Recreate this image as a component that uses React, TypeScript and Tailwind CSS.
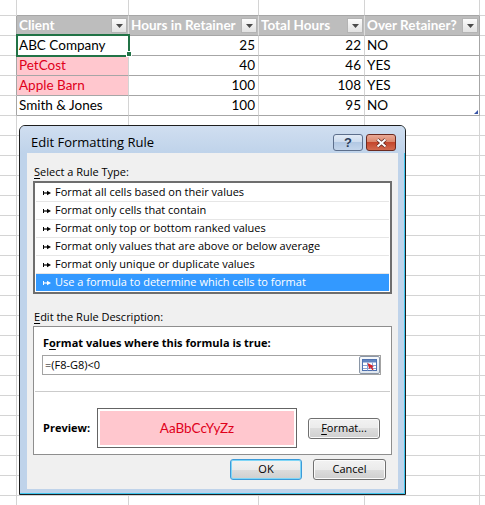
import React from 'react';

type DataRow = { client: string; hours: number; total: number; over: string; flagged: boolean };

const data: DataRow[] = [
  { client: 'ABC Company', hours: 25, total: 22, over: 'NO', flagged: false },
  { client: 'PetCost', hours: 40, total: 46, over: 'YES', flagged: true },
  { client: 'Apple Barn', hours: 100, total: 108, over: 'YES', flagged: true },
  { client: 'Smith & Jones', hours: 100, total: 95, over: 'NO', flagged: false },
];

const ruleTypes = [
  'Format all cells based on their values',
  'Format only cells that contain',
  'Format only top or bottom ranked values',
  'Format only values that are above or below average',
  'Format only unique or duplicate values',
  'Use a formula to determine which cells to format',
];

function FilterButton() {
  return (
    <div className="w-[16px] h-[15px] shrink-0 border border-[#b4b4b4] bg-linear-to-b from-[#fbfbfb] to-[#e2e2e2] flex items-center justify-center">
      <svg width="7" height="4" viewBox="0 0 7 4">
        <path d="M0 0h7L3.5 4z" fill="#4a4a4a" />
      </svg>
    </div>
  );
}

function HeaderCell({ w, label, last = false }: { w: string; label: string; last?: boolean }) {
  return (
    <div
      className={`${w} shrink-0 h-full border-r border-b border-b-[#a6a6a6] ${
        last ? 'border-r-[#a6a6a6]' : 'border-r-[#dedede]'
      } bg-[#bdbdbd] flex items-center pl-[2px] pr-[1px]`}
    >
      <span className="flex-1 min-w-0 overflow-hidden whitespace-nowrap font-bold text-white">{label}</span>
      <FilterButton />
    </div>
  );
}

function EmptyRow() {
  return (
    <div className="flex h-[20px] shrink-0">
      <div className="w-[17px] shrink-0 border-r border-b border-[#d4d4d4]" />
      <div className="w-[112px] shrink-0 border-r border-b border-[#d4d4d4]" />
      <div className="w-[130px] shrink-0 border-r border-b border-[#d4d4d4]" />
      <div className="w-[106px] shrink-0 border-r border-b border-[#d4d4d4]" />
      <div className="w-[115px] shrink-0 border-r border-b border-[#d4d4d4]" />
      <div className="flex-1 border-b border-[#d4d4d4]" />
    </div>
  );
}

function Sheet() {
  return (
    <div className="flex flex-col font-['Lato',sans-serif] text-[13.5px] text-black">
      {/* row above the table */}
      <div className="flex h-[16px] shrink-0">
        <div className="w-[17px] shrink-0 border-r border-b border-[#d4d4d4]" />
        <div className="w-[112px] shrink-0 border-r border-b border-r-[#d4d4d4] border-b-[#a6a6a6]" />
        <div className="w-[130px] shrink-0 border-r border-b border-r-[#d4d4d4] border-b-[#a6a6a6]" />
        <div className="w-[106px] shrink-0 border-r border-b border-r-[#d4d4d4] border-b-[#a6a6a6]" />
        <div className="w-[115px] shrink-0 border-r border-b border-r-[#d4d4d4] border-b-[#a6a6a6]" />
        <div className="flex-1 border-b border-[#d4d4d4]" />
      </div>

      {/* table header */}
      <div className="flex h-[20px] shrink-0">
        <div className="w-[17px] shrink-0 border-r border-b border-r-[#a6a6a6] border-b-[#d4d4d4]" />
        <HeaderCell w="w-[112px]" label="Client" />
        <HeaderCell w="w-[130px]" label="Hours in Retainer" />
        <HeaderCell w="w-[106px]" label="Total Hours" />
        <HeaderCell w="w-[115px]" label="Over Retainer?" last />
        <div className="flex-1 border-b border-[#d4d4d4]" />
      </div>

      {/* table body */}
      {data.map((r, i) => (
        <div key={r.client} className="flex h-[20px] shrink-0">
          <div className="w-[17px] shrink-0 border-r border-b border-r-[#a6a6a6] border-b-[#d4d4d4]" />
          <div
            className={`w-[112px] shrink-0 relative border-r border-b border-r-[#d4d4d4] border-b-[#a6a6a6] flex items-center px-[2px] whitespace-nowrap ${
              r.flagged ? 'bg-[#ffc7ce] text-[#e0001b]' : ''
            }`}
          >
            {r.client}
            {i === 0 && (
              <>
                <div className="absolute z-10 left-[-1px] top-[-2px] w-[114px] h-[23px] border-2 border-[#217346]" />
                <div className="absolute z-10 left-[109px] top-[15px] w-[6px] h-[6px] bg-[#217346] border border-white" />
              </>
            )}
          </div>
          <div className="w-[130px] shrink-0 border-r border-b border-r-[#d4d4d4] border-b-[#a6a6a6] flex items-center justify-end px-[3px]">
            {r.hours}
          </div>
          <div className="w-[106px] shrink-0 border-r border-b border-r-[#d4d4d4] border-b-[#a6a6a6] flex items-center justify-end px-[3px]">
            {r.total}
          </div>
          <div className="w-[115px] shrink-0 relative border-r border-b border-[#a6a6a6] flex items-center px-[2px]">
            {r.over}
            {i === data.length - 1 && (
              <svg className="absolute right-[1px] bottom-[1px]" width="4" height="4" viewBox="0 0 4 4">
                <path d="M4 0v4H0z" fill="#3a56a8" />
              </svg>
            )}
          </div>
          <div className="flex-1 border-b border-[#d4d4d4]" />
        </div>
      ))}

      {Array.from({ length: 20 }).map((_, i) => (
        <EmptyRow key={i} />
      ))}
    </div>
  );
}

function RuleIcon({ selected }: { selected: boolean }) {
  const c = selected ? '#ffffff' : '#000000';
  return (
    <svg width="8" height="6" viewBox="0 0 8 6" className="shrink-0">
      <path d="M0.5 1v4" stroke={c} strokeWidth="1" />
      <path d="M0 3h4.5" stroke={c} strokeWidth="1.2" />
      <path d="M4 0.8L8 3L4 5.2z" fill={c} />
    </svg>
  );
}

function WinButton({ children, primary = false, className = '' }: { children: React.ReactNode; primary?: boolean; className?: string }) {
  return (
    <div
      className={`h-[21px] flex items-center justify-center rounded-[3px] border bg-[linear-gradient(#f2f2f2_0%,#ebebeb_50%,#dddddd_50%,#cfcfcf_100%)] ${
        primary
          ? 'border-[#3c9ad8] shadow-[inset_0_0_0_1px_#7fd6f7]'
          : 'border-[#707070] shadow-[inset_0_0_0_1px_#fbfbfb]'
      } ${className}`}
    >
      {children}
    </div>
  );
}

function CollapseIcon() {
  return (
    <div className="w-[21px] h-[18px] shrink-0 rounded-[2px] border border-[#8a96a6] bg-linear-to-b from-[#f7f9fc] to-[#dfe6ee] flex items-center justify-center">
      <svg width="15" height="12" viewBox="0 0 15 12">
        <rect x="0.5" y="0.5" width="14" height="11" fill="#ffffff" stroke="#4f72b0" />
        <rect x="1" y="1" width="13" height="2.5" fill="#5f84c2" />
        <path d="M1 6.5h13M1 9.5h13M5.5 3.5v8M10.5 3.5v8" stroke="#86a3d4" strokeWidth="1" />
        <path d="M5.5 4L12 7.2L10 7.9L11.6 10.6L10.3 11.3L8.7 8.6L7.2 10z" fill="#d6262c" />
      </svg>
    </div>
  );
}

function Dialog() {
  return (
    <div className="absolute z-20 left-[19px] top-[125px] w-[387px] h-[370px] flex flex-col rounded-t-[6px] border border-[#1e1e1e] bg-[#bfd3ea] shadow-[inset_-1px_-1px_0_#3fc6ef] font-['Open_Sans',sans-serif] text-[11px] text-black">
      {/* title bar */}
      <div className="h-[27px] shrink-0 flex items-start justify-between pl-[11px] pr-[9px] rounded-t-[5px] bg-linear-to-b from-[#d0def0] to-[#bfd3ea]">
        <span className="pt-[8px] text-[13px] leading-[17px]">Edit Formatting Rule</span>
        <div className="flex gap-[3px] pt-[8px]">
          <div className="w-[30px] h-[17px] rounded-[3px] border border-[#5d6f8c] bg-[linear-gradient(#e2ebf6_0%,#ccdbee_50%,#b2c8e3_50%,#c3d5eb_100%)] flex items-center justify-center">
            <span className="text-[13px] leading-none font-bold text-[#2c3e5a] font-['Liberation_Sans',sans-serif]">?</span>
          </div>
          <div className="w-[30px] h-[17px] rounded-[3px] border border-[#6b2a20] bg-[linear-gradient(#eaa996_0%,#d98469_50%,#c4462c_50%,#d26a4e_100%)] flex items-center justify-center">
            <svg width="13" height="10" viewBox="0 0 13 10">
              <path d="M2.5 1.5L10.5 8.5M10.5 1.5L2.5 8.5" stroke="#5b231b" strokeWidth="3.6" />
              <path d="M2.5 1.5L10.5 8.5M10.5 1.5L2.5 8.5" stroke="#ffffff" strokeWidth="2" />
            </svg>
          </div>
        </div>
      </div>

      {/* content */}
      <div className="mx-[7px] h-[336px] shrink-0 bg-[#f0f0f0] px-[6px] flex flex-col">
        <div className="mt-[11px] h-[15px] leading-[15px] pl-[1px]">
          <span className="underline underline-offset-2">S</span>elect a Rule Type:
        </div>

        <div className="mt-[2px] h-[113px] border-2 border-[#6e6e6e] bg-white p-[1px] flex flex-col">
          {ruleTypes.map((t, i) => {
            const selected = i === ruleTypes.length - 1;
            return (
              <div
                key={t}
                className={`h-[18px] last:h-[17px] shrink-0 flex items-center gap-[4px] pl-[7px] whitespace-nowrap ${
                  selected ? 'bg-[#3399ff] text-white' : 'border-b border-[#e6e6e6]'
                }`}
              >
                <RuleIcon selected={selected} />
                <span>{t}</span>
              </div>
            );
          })}
        </div>

        <div className="mt-[15px] h-[15px] leading-[15px] pl-[1px]">
          <span className="underline underline-offset-2">E</span>dit the Rule Description:
        </div>

        <div className="mt-[2px] h-[129px] border border-[#8e8e8e] bg-white flex flex-col">
          <div className="mt-[8px] h-[15px] leading-[15px] pl-[9px] font-bold">
            F<span className="underline underline-offset-2">o</span>rmat values where this formula is true:
          </div>
          <div className="mt-[5px] ml-[8px] w-[339px] h-[20px] border border-[#a3a3a3] flex items-center">
            <span className="flex-1 pl-[2px]">=(F8-G8)&lt;0</span>
            <CollapseIcon />
          </div>
          <div className="mt-[16px] mx-[1px] h-px bg-[#cbcbcb]" />
          <div className="mt-[16px] h-[40px] flex items-center pl-[9px]">
            <span className="w-[54px] font-bold">Preview:</span>
            <div className="w-[200px] h-[40px] border border-[#646464] p-[2px]">
              <div className="h-full bg-[#ffc7ce] flex items-center justify-center font-['Lato',sans-serif] text-[13.5px] text-[#e0001b]">
                AaBbCcYyZz
              </div>
            </div>
            <WinButton className="ml-[11px] w-[72px]">
              <span>
                <span className="underline underline-offset-2">F</span>ormat...
              </span>
            </WinButton>
          </div>
        </div>

        <div className="mt-[4px] flex justify-end gap-[11px] pr-[6px]">
          <WinButton primary className="w-[72px]">OK</WinButton>
          <WinButton className="w-[73px]">Cancel</WinButton>
        </div>
      </div>
    </div>
  );
}

export default function App() {
  return (
    <div className="relative w-[485px] h-[505px] overflow-hidden bg-white">
      <Sheet />
      <Dialog />
    </div>
  );
}
